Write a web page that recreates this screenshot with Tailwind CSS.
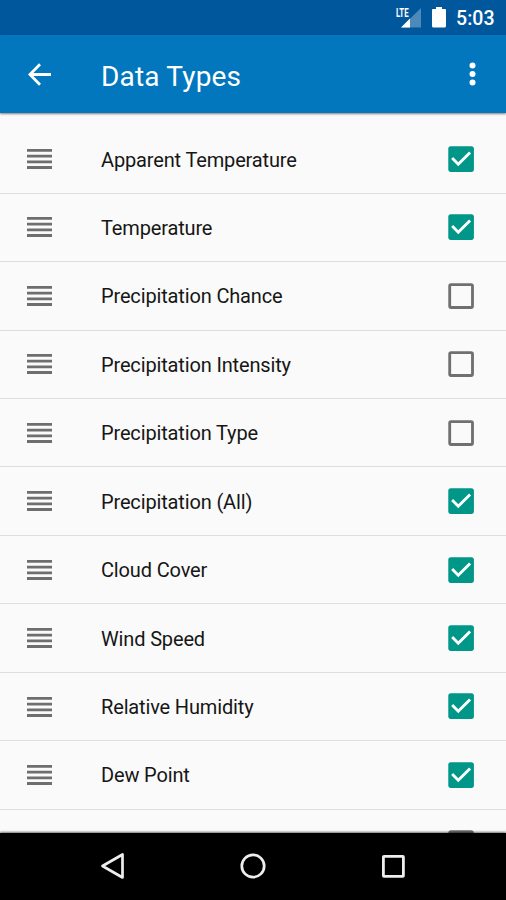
<!DOCTYPE html>
<html lang="en">
<head>
<meta charset="utf-8">
<title>Data Types</title>
<script src="https://cdn.jsdelivr.net/npm/@tailwindcss/browser@4"></script>
</head>
<body class="font-[Roboto,sans-serif] bg-black">
<svg class="hidden">
  <symbol id="handle" viewBox="0 0 25 20" preserveAspectRatio="none"><path fill="#6e6e6e" d="M0 0h25v2.8H0zM0 5.7h25v2.8H0zM0 11.4h25v2.8H0zM0 17.1h25v2.8H0z"/></symbol>
  <symbol id="on" viewBox="0 0 24 24"><rect x="3" y="3" width="18" height="18" rx="1.8" fill="#009688"/><path d="M5.7 11.3 10 15.6 18.3 7.3" fill="none" stroke="#fff" stroke-width="2"/></symbol>
  <symbol id="off" viewBox="0 0 24 24"><rect x="4" y="4" width="16" height="16" rx="1" fill="none" stroke="#707070" stroke-width="2"/></symbol>
</svg>
<div class="w-[506px] h-[900px] flex flex-col overflow-hidden bg-[#fafafa]">
  <div class="h-[35px] shrink-0 bg-[#01579b] flex items-start justify-end pr-[11.500px] text-white">
    <svg class="w-[26px] h-[28px] mr-[10.500px]" viewBox="0 0 26 28">
      <path d="M25 8v19.500H5z" fill="#fff" fill-opacity=".3"/>
      <path d="M14 18.500v9H5z" fill="#fff"/>
      <path d="M0 6h13v12.500L10 20H0z" fill="#01579b"/>
      <text transform="translate(0 16.700) scale(.6 1)" font-size="13" font-weight="700" fill="#fff">LTE</text>
    </svg>
    <svg class="w-[14px] h-[28px] mr-[10px]" viewBox="0 0 14 28"><path d="M4 7h6v2h3q1 0 1 1v16q0 1.500-1.500 1.500h-11Q0 27.500 0 26V10q0-1 1-1h3z" fill="#fff"/></svg>
    <span class="text-[19.5px] leading-[38px] font-medium">5:03</span>
  </div>
  <div class="relative z-10 h-[78px] shrink-0 bg-[#0277bd] flex items-center pl-[28px] pr-[30px] text-white shadow-[0_1px_2px_rgba(0,0,0,0.5)]">
    <svg class="w-[23px] h-[23px]" viewBox="0 0 23 23"><path d="M23 11.500H2M12 1.300 1.900 11.500 12 21.700" fill="none" stroke="#fff" stroke-width="2.800"/></svg>
    <h1 class="ml-[50px] pt-[5px] text-[28px] leading-8 tracking-[0.18px] flex-1">Data Types</h1>
    <svg class="w-[7px] h-[24px]" viewBox="0 0 7 24" fill="#fff"><circle cx="3.500" cy="3.500" r="3"/><circle cx="3.500" cy="12" r="3"/><circle cx="3.500" cy="20.400" r="3"/></svg>
  </div>
  <div id="list" class="h-[720px] shrink-0 pt-[12.300px] overflow-hidden"></div>
  <div class="relative z-10 flex-1 bg-black flex items-center pb-[2px] pl-[100px] pr-[100px] justify-between shadow-[0_-1px_2px_rgba(0,0,0,0.55)]">
    <svg class="w-[26px] h-[28px]" viewBox="0 0 26 28"><path d="M22.500 2.500v23L2.500 14z" fill="none" stroke="#eee" stroke-width="2.700" stroke-linejoin="round"/></svg>
    <svg class="w-[26px] h-[26px]" viewBox="0 0 26 26"><circle cx="13" cy="13" r="11.200" fill="none" stroke="#eee" stroke-width="2.700"/></svg>
    <svg class="w-[26px] h-[26px]" viewBox="0 0 26 26"><rect x="3.400" y="3.400" width="20" height="20" rx=".6" fill="none" stroke="#eee" stroke-width="2.800"/></svg>
  </div>
</div>
<script>
  const rows = [["Apparent Temperature", 1], ["Temperature", 1], ["Precipitation Chance", 0], ["Precipitation Intensity", 0], ["Precipitation Type", 0], ["Precipitation (All)", 1], ["Cloud Cover", 1], ["Wind Speed", 1], ["Relative Humidity", 1], ["Dew Point", 1], ["", 0]];
  document.getElementById("list").innerHTML = rows.map(([name, on]) => `
    <div class="h-[68.440px] flex items-center pl-[26.500px] pr-[28px] border-b border-[#dedede]">
      <svg class="w-[25.500px] h-[20px] shrink-0"><use href="#handle"/></svg>
      <span class="ml-[49px] flex-1 text-[20px] leading-6 pt-[1px] tracking-[-0.150px] text-[#161616]">${name}</span>
      <svg class="w-[34.200px] h-[34.200px] shrink-0"><use href="#${on ? "on" : "off"}"/></svg>
    </div>`).join("");
</script>
</body>
</html>
